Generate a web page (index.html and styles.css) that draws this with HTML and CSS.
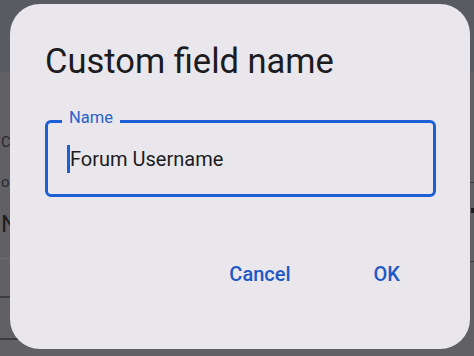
FILE: index.html
```html
<!DOCTYPE html>
<html lang="en">
<head>
<meta charset="utf-8">
<title>Custom field name</title>
<link rel="stylesheet" href="styles.css">
</head>
<body>
<div class="screen">
  <div class="behind">
    <div class="appbar"></div>
    <div class="content">
      <div class="left-col">
        <div class="frag frag-c">Cu</div>
        <div class="frag frag-o">o</div>
        <div class="frag frag-n">N</div>
        <div class="rule rule-light"></div>
        <div class="rule rule-dark rule-a"></div>
        <div class="rule rule-dark rule-b"></div>
      </div>
      <div class="right-col">
        <div class="rule rule-thin r1"></div>
        <div class="mark"></div>
        <div class="rule rule-thin r2"></div>
      </div>
    </div>
  </div>

  <div class="dialog" role="dialog" aria-labelledby="dlg-title">
    <h1 class="title" id="dlg-title">Custom field name</h1>
    <div class="field">
      <span class="field-label">Name</span>
      <span class="caret"></span>
      <span class="field-value">Forum Username</span>
    </div>
    <div class="actions">
      <button class="btn" type="button">Cancel</button>
      <button class="btn" type="button">OK</button>
    </div>
  </div>
</div>
</body>
</html>
```

FILE: styles.css
```css
* { box-sizing: border-box; }

html, body {
  margin: 0;
  padding: 0;
}

body {
  width: 474px;
  height: 356px;
  overflow: hidden;
  background: #5f5f63;
  font-family: Roboto, "Noto Sans", "Liberation Sans", sans-serif;
}

.screen {
  position: relative;
  width: 474px;
  height: 356px;
}

/* dimmed page behind the dialog */
.behind {
  height: 356px;
  display: flex;
  flex-direction: column;
}

.appbar {
  height: 72px;
  background: #595b63;
}

.content {
  flex: 1;
  display: flex;
  justify-content: space-between;
  background: #616064;
}

.left-col {
  width: 240px;
  display: flex;
  flex-direction: column;
}

.frag {
  color: #2a2a2d;
  line-height: 1;
  padding-left: 1px;
}

.frag-c {
  margin-top: 63px;
  font-size: 15px;
}

.frag-o {
  margin-top: 25px;
  font-size: 15px;
}

.frag-n {
  margin-top: 22px;
  font-size: 24px;
  color: #1f1f22;
}

.rule { width: 100%; }

.rule-light {
  margin-top: 22px;
  height: 1px;
  background: #6e6d72;
}

.rule-dark {
  height: 2px;
  background: #3c3d41;
}

.rule-a { margin-top: 37px; }
.rule-b { margin-top: 40px; }

.right-col {
  width: 60px;
  display: flex;
  flex-direction: column;
  align-items: flex-end;
}

.rule-thin {
  height: 1px;
  background: #3a3a3e;
}

.r1 { margin-top: 110px; }

.mark {
  margin-top: 25px;
  width: 3px;
  height: 5px;
  background: #1b1b1d;
}

.r2 { margin-top: 48px; }

/* dialog */
.dialog {
  position: absolute;
  left: 10px;
  top: 4px;
  width: 460px;
  height: 345px;
  background: #e9e7ec;
  border-radius: 30px;
  padding: 37px 34px 0 35px;
}

.title {
  margin: 0;
  font-size: 34.5px;
  line-height: 40px;
  font-weight: 400;
  color: #1c1b1f;
  letter-spacing: 0;
}

.field {
  position: relative;
  margin-top: 39px;
  height: 77px;
  border: 3px solid #1d5fd4;
  border-radius: 6px;
  display: flex;
  align-items: center;
  padding-left: 19px;
}

.field-label {
  position: absolute;
  top: -14px;
  left: 14px;
  padding: 0 7px;
  background: #e9e7ec;
  color: #2a62c9;
  font-size: 16.5px;
  line-height: 18px;
}

.caret {
  width: 3px;
  height: 28px;
  background: #1d5fd4;
  flex: none;
}

.field-value {
  font-size: 20px;
  color: #1c1b1f;
}

.actions {
  margin-top: 55px;
  display: flex;
  justify-content: flex-end;
  gap: 59px;
  padding-right: 24px;
}

.btn {
  border: 0;
  background: transparent;
  padding: 10px 12px;
  font-family: inherit;
  font-size: 20px;
  line-height: 24px;
  font-weight: 500;
  color: #2158c5;
  cursor: pointer;
}
```
